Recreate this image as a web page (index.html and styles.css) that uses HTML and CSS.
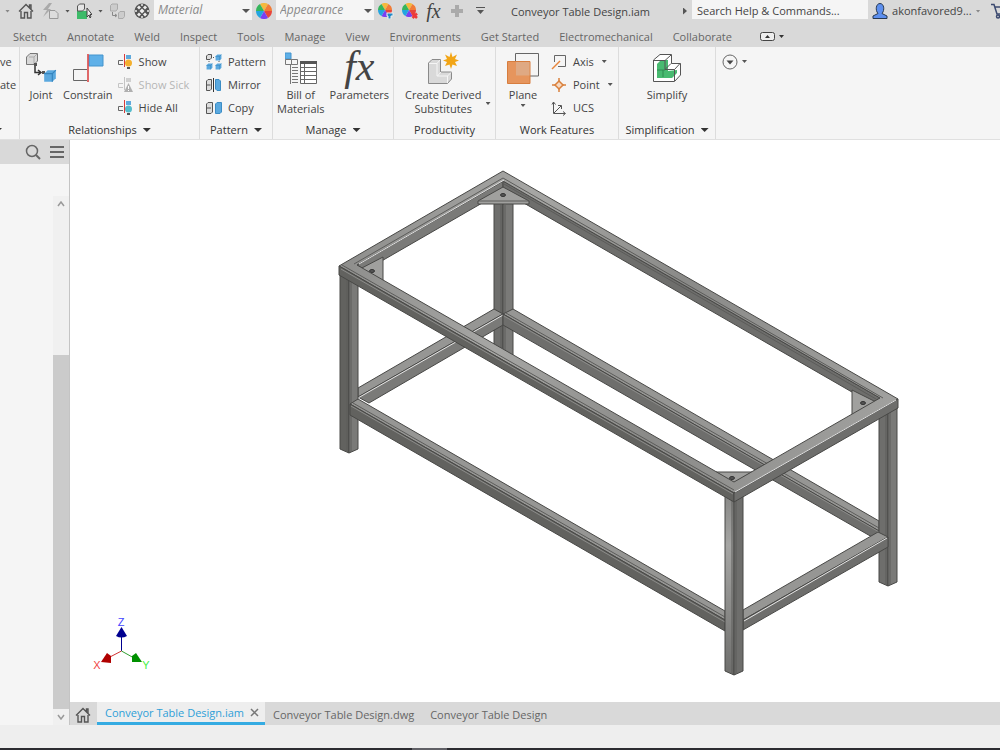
FILE: index.html
```
<!DOCTYPE html>
<html lang="en">
<head>
<meta charset="UTF-8">
<meta name="viewport" content="width=device-width, initial-scale=1.0">
<title>Conveyor Table Design.iam</title>
<link rel="stylesheet" href="styles.css">
</head>
<body>
<svg class="defs" width="0" height="0">
    <defs>
        <symbol id="wheel" viewBox="0 0 16 16">
            <path d="M8 8L4 1.100A8 8 0 0 1 12 1.100Z" fill="#f5b93c"/>
            <path d="M8 8L12 1.100A8 8 0 0 1 16 8Z" fill="#f27b35"/>
            <path d="M8 8L16 8A8 8 0 0 1 12 14.900Z" fill="#e8453c"/>
            <path d="M8 8L12 14.900A8 8 0 0 1 4 14.900Z" fill="#7a3ff2"/>
            <path d="M8 8L4 14.900A8 8 0 0 1 0 8Z" fill="#22a5e0"/>
            <path d="M8 8L0 8A8 8 0 0 1 4 1.100Z" fill="#35b55c"/>
        </symbol>
        <symbol id="house" viewBox="0 0 16 16">
            <path d="M1 8.500L8 1.500L15 8.500M3 8V15H6.500V9.500H9.500V15H13V8M11.500 4.500V2H13V6" fill="none" stroke="#555" stroke-width="1.400"/>
        </symbol>
        <symbol id="cube" viewBox="0 0 12 12">
            <path d="M1 4L4 1H11V8L8 11H1Z" fill="#5ba9df"/>
            <path d="M1 4H8V11M8 4L11 1" fill="none" stroke="#3585be"/>
        </symbol>
    </defs>
</svg>
<div class="app">
    <header class="titlebar">
        <i class="arrow faint"></i>
        <button class="tool" aria-label="Home"><svg width="16" height="16"><use href="#house"/></svg></button>
        <button class="tool" aria-label="Update">
            <svg width="17" height="16" fill="none"><path d="M7 0L1 7H5L1 14L9 6H6L10 0Z" fill="#aaa"/><path d="M7.500 7.500H13L16 10.500V15.500H7.500Z" fill="#ddd" stroke="#999"/></svg>
        </button>
        <i class="arrow"></i>
        <button class="tool" aria-label="Select">
            <svg width="16" height="16" fill="none"><path d="M1 8H11V16H1Z" fill="#3dbb69"/><path d="M1.500 3L3.500 1H8.500V6L6.500 8H1.500Z" fill="#e6e6e6" stroke="#555"/><path d="M11 5V14L13 12L14 15L15 14L14 11.500H16Z" fill="#eee" stroke="#444"/></svg>
        </button>
        <i class="arrow"></i>
        <button class="tool" aria-label="Joint view">
            <svg width="17" height="16" fill="none"><path d="M1.500 2.500L3 1H8.500V6L7 8H1.500ZM9.500 10L11 8.500H15.500V13.500L14 15.500H9.500Z" fill="#ccc" stroke="#aaa"/><path d="M3.500 9V12.500H7M6 11L8 12.500L6 14" stroke="#888"/></svg>
        </button>
        <button class="tool" aria-label="Material browser">
            <svg width="16" height="16"><circle cx="8" cy="8" r="7.500" fill="#555"/><g fill="#eee"><path d="M8 5.500L10.500 8L8 10.500L5.500 8Z"/><path d="M5 2.500L7 4.500L5 6.500L3 4.500ZM11 2.500L13 4.500L11 6.500L9 4.500ZM5 9.500L7 11.500L5 13.500L3 11.500ZM11 9.500L13 11.500L11 13.500L9 11.500Z"/><circle cx="8" cy="2" r="1"/><circle cx="8" cy="14" r="1"/><circle cx="2" cy="8" r="1"/><circle cx="14" cy="8" r="1"/></g></svg>
        </button>
        <label class="combo"><select aria-label="Material"><option>Material</option></select></label>
        <button class="tool" aria-label="Appearance browser"><svg width="16" height="16"><use href="#wheel"/></svg></button>
        <label class="combo"><select aria-label="Appearance"><option>Appearance</option></select></label>
        <button class="tool" aria-label="Adjust">
            <svg width="17" height="16"><use href="#wheel" width="14" height="14"/><path d="M9 10H15V13H13V16H10V13H9Z" fill="#2089c8" stroke="#eee"/></svg>
        </button>
        <button class="tool wide" aria-label="Clear">
            <svg width="17" height="16"><use href="#wheel" width="14" height="14"/><path d="M10.500 10.500L15 15M15 10.500L10.500 15" stroke="#ee3a3a" stroke-width="2.500"/></svg>
        </button>
        <button class="tool wide fx">fx</button>
        <button class="tool wide" aria-label="Add"><svg width="12" height="12"><path d="M6 0V12M0 6H12" stroke="#aaa" stroke-width="4"/></svg></button>
        <button class="tool" aria-label="Customize"><svg width="9" height="8"><path d="M0 .500H9" stroke="#555"/><path d="M1 3H8L4.500 7Z" fill="#555"/></svg></button>
        <span class="doc-title">Conveyor Table Design.iam</span>
        <i class="arrow-right"></i>
        <input class="search" type="text" aria-label="Search" placeholder="Search Help &amp; Commands...">
        <button class="user">
            <svg width="16" height="16"><path d="M1 15.500V13L6 10.500C3 7 4 .500 8 .500S13 7 10 10.500L15 13V15.500Z" fill="#5d8fee" stroke="#273850"/></svg>
            akonfavored9...
        </button>
        <i class="arrow faint"></i>
        <button class="tool cart" aria-label="Store"><svg width="18" height="16" fill="none" stroke="#3c4a70" stroke-width="1.500"><path d="M0 1.500H3L6 11H15L17 4H4"/><circle cx="7" cy="13.500" r="1.500"/><circle cx="14" cy="13.500" r="1.500"/></svg></button>
    </header>

    <nav class="tabs">
        <a href="#">Sketch</a>
        <a href="#">Annotate</a>
        <a href="#">Weld</a>
        <a href="#">Inspect</a>
        <a href="#">Tools</a>
        <a href="#">Manage</a>
        <a href="#">View</a>
        <a href="#">Environments</a>
        <a href="#">Get Started</a>
        <a href="#">Electromechanical</a>
        <a href="#">Collaborate</a>
        <button class="tool minimize" aria-label="Minimize ribbon">
            <svg width="24" height="9"><rect x=".5" y=".5" width="14" height="8" rx="2" fill="#eee" stroke="#444"/><path d="M5 6L7.500 3L10 6ZM19 3H24L21.500 6Z" fill="#333"/></svg>
        </button>
    </nav>

    <div class="ribbon">
        <section class="panel position">
            <div class="tools">
                <div class="stack">
                    <button>ve</button>
                    <button>ate</button>
                </div>
            </div>
            <h2><i class="arrow big"></i></h2>
        </section>
        <section class="panel relationships">
            <div class="tools">
                <button class="large">
                    <svg width="32" height="32" fill="none"><path d="M1.500 5L5 1.500H12.500V9L9 12.500H1.500Z" fill="#d8d8d8" stroke="#777"/><path d="M4 5H9V12M9 5L12 2" stroke="#aaa"/><path d="M10 14V20.500H15M13 18L16 20.500L13 23" stroke="#333" stroke-width="1.500"/><path d="M9 11H12V14H9ZM17 19H20V22H17Z" fill="#555"/><use href="#cube" x="18" y="17" width="14" height="14"/></svg>
                    Joint
                </button>
                <button class="large constrain">
                    <svg width="32" height="32" fill="none"><path d="M17 3H31V14H17Z" fill="#5fb0e8" stroke="#4494cd"/><path d="M15 17.500H1.500V28.500H15" stroke="#666"/><path d="M16 2V30" stroke="#d83a3a" stroke-width="1.500"/></svg>
                    Constrain
                </button>
                <div class="stack">
                    <button><svg width="16" height="16" fill="none"><path d="M6 6.500H1.500V10.500H6" stroke="#666"/><path d="M7.500 0V13" stroke="#d83a3a"/><path d="M9 1H14V5H9Z" fill="#5fa9dc"/><circle cx="11.500" cy="9" r="3.500" fill="#f4b02e"/><path d="M10 13H13V15H10Z" fill="#555"/></svg>Show</button>
                    <button disabled><svg width="16" height="16" fill="none"><path d="M6 6.500H1.500V10.500H6M7.500 0V13" stroke="#c4c4c4"/><path d="M9 1H14V5H9Z" fill="#d0d0d0"/><path d="M11.500 6L16 15H7Z" fill="#b0b0b0"/><path d="M11.500 9V12M11.500 13V14" stroke="#fff"/></svg>Show Sick</button>
                    <button><svg width="16" height="16" fill="none"><path d="M6 6.500H1.500V10.500H6" stroke="#666"/><path d="M7.500 0V13" stroke="#d83a3a"/><path d="M9 1H14V5H9Z" fill="#5fa9dc"/><circle cx="11.500" cy="9" r="3.500" fill="#55bccb"/><path d="M10 13H13V15H10Z" fill="#555"/></svg>Hide All</button>
                </div>
            </div>
            <h2>Relationships <i class="arrow big"></i></h2>
        </section>
        <section class="panel pattern">
            <div class="tools">
                <div class="stack">
                    <button><svg width="16" height="16" fill="none"><path d="M.500 2L2 .500H5.500V4L4 5.500H.500Z" fill="#ddd" stroke="#555"/><path d="M7 3.500H9M3 7V9M13 7V9" stroke="#555" stroke-dasharray="1 1"/><use href="#cube" x="9" y="0" width="7" height="7"/><use href="#cube" x="0" y="9" width="7" height="7"/><use href="#cube" x="9" y="9" width="7" height="7"/></svg>Pattern</button>
                    <button><svg width="16" height="16" fill="none"><path d="M.500 4L2 2.500H5.500V12L4 13.500H.500ZM.500 8H4.500" fill="#ddd" stroke="#555"/><path d="M7.500 1V15" stroke="#333"/><path d="M9.500 2.500H13L14.500 4V13.500H11L9.500 12Z" fill="#5ba9df" stroke="#3c8dc5"/></svg>Mirror</button>
                    <button><svg width="16" height="16" fill="none"><path d="M.500 4L2 2.500H6.500V12L5 13.500H.500ZM.500 8H5" fill="#ddd" stroke="#555"/><path d="M9.500 4L11 2.500H15.500V12L14 13.500H9.500Z" fill="#5ba9df" stroke="#3c8dc5"/></svg>Copy</button>
                </div>
            </div>
            <h2>Pattern <i class="arrow big"></i></h2>
        </section>
        <section class="panel manage">
            <div class="tools">
                <button class="large">
                    <svg width="32" height="32" fill="none"><path d="M0 1H6V7H0Z" fill="#5fb0e8" stroke="#4494cd"/><path d="M.500 7.500H6.500V12.500H.500ZM6.500 7.500H12.500V12.500H6.500ZM5.500 13V32" stroke="#777"/><path d="M7 15.500H13M7 18.500H13M7 21.500H13M7 24.500H13M7 27.500H13M7 30.500H13" stroke="#777"/><path d="M15.500 9.500H31.500V31.500H15.500ZM15.500 15.500H31.500M15.500 19.500H31.500M15.500 23.500H31.500M15.500 27.500H31.500M19.500 12V31" fill="#fff" stroke="#666"/><path d="M15 9H32V12H15Z" fill="#555"/></svg>
                    Bill of<br>Materials
                </button>
                <button class="large parameters"><span class="fx-large">fx</span>Parameters</button>
            </div>
            <h2>Manage <i class="arrow big"></i></h2>
        </section>
        <section class="panel productivity">
            <div class="tools">
                <button class="large">
                    <svg width="32" height="32" fill="none"><path d="M1.500 11L5 7.500H13.500V20H24.500V27L20.500 31.500H1.500Z" fill="#d9d9d9" stroke="#8a8a8a"/><path d="M2 11.500H10V24H20.500V31M10 11.500L13 8M10.500 24L14 20M20.500 24L24 20.500" stroke="#f5f5f5"/><path d="M24 0L25.500 5L30 2.500L28 7L32 8.500L28 10L30 14L25.500 12.500L24 17L22.500 12.500L18 14L20 10L16 8.500L20 7L18 2.500L22.500 5Z" fill="#f2a516"/></svg>
                    Create Derived<br>Substitutes
                </button>
                <i class="arrow side"></i>
            </div>
            <h2>Productivity</h2>
        </section>
        <section class="panel features">
            <div class="tools">
                <button class="large">
                    <svg width="32" height="32" fill="none"><path d="M8.500 1.500H31.500V24H8.500Z" stroke="#666"/><path d="M.500 9.500H23V31.500H.500Z" fill="#e6955d" stroke="#d77d3e"/><path d="M9 10H22.500V23.500H9Z" fill="#dfa983"/></svg>
                    Plane
                    <i class="arrow"></i>
                </button>
                <div class="stack">
                    <button><svg width="16" height="16" fill="none"><path d="M3.500 8V1.500H14.500V12.500H7" stroke="#666"/><path d="M1 15L9 7" stroke="#e8853b" stroke-width="1.500"/></svg>Axis <i class="arrow"></i></button>
                    <button><svg width="16" height="16" fill="none" stroke="#d9803c"><path d="M8 1V5M8 11V15M1 8H4M12 8H15" stroke-width="1.500"/><path d="M8 4L12 8L8 12L4 8Z" fill="#f6d9c2" stroke-width="1.500"/></svg>Point <i class="arrow"></i></button>
                    <button><svg width="16" height="16" fill="none" stroke="#555"><path d="M2.500 2V13.500H14M1 4.500L2.500 2L4.500 4.500M12 11.500L14.500 13.500L12 15.500M3 13L10 6M7 5.500H10.500V9"/></svg>UCS</button>
                </div>
            </div>
            <h2>Work Features</h2>
        </section>
        <section class="panel simplification">
            <div class="tools">
                <button class="large">
                    <svg width="32" height="32" fill="none"><path d="M2.500 8L9 2.500H20.500V11.500H29.500V23L23.500 29.500H2.500Z" fill="#fff" stroke="#555"/><path d="M6 12L10 8H17V19L26 18V21L21 26H6Z" fill="#48ba70"/><path d="M2.500 8.500H14V17.500H23.500V29M14 8.500L20 3M14 17.500L20 11.500M23.500 17.500L29 11.500" stroke="#555"/><path d="M6 18H14M12 18V25" stroke="#2f8a50"/></svg>
                    Simplify
                </button>
            </div>
            <h2>Simplification <i class="arrow big"></i></h2>
        </section>
        <section class="panel more">
            <div class="tools">
                <div class="stack">
                    <button aria-label="More"><svg width="16" height="16"><circle cx="8" cy="8" r="7" fill="none" stroke="#666"/><path d="M4.500 6.500H11.500L8 10.500Z" fill="#444"/></svg><i class="arrow"></i></button>
                </div>
            </div>
        </section>
    </div>

    <div class="workspace">
        <aside class="browser">
            <div class="browser-bar">
                <button class="tool" aria-label="Find"><svg width="16" height="16" fill="none" stroke="#666"><circle cx="7" cy="7" r="5.500" stroke-width="1.500"/><path d="M11 11L15 15" stroke-width="2"/></svg></button>
                <button class="tool" aria-label="Menu"><svg width="14" height="14" stroke="#666" stroke-width="2"><path d="M0 2H14M0 7H14M0 12H14"/></svg></button>
            </div>
            <div class="scrollbar">
                <button class="tool" aria-label="Scroll up"><svg width="8" height="6"><path d="M1 5L4 1L7 5" fill="none" stroke="#999" stroke-width="1.500"/></svg></button>
                <div class="thumb"></div>
                <button class="tool" aria-label="Scroll down"><svg width="8" height="6"><path d="M1 1L4 5L7 1" fill="none" stroke="#999" stroke-width="1.500"/></svg></button>
            </div>
        </aside>
        <main>
            <!-- isometric view of the welded table frame -->
            <svg class="viewport" viewBox="70 140 930 562" role="img" aria-label="Table frame">
                <defs>
                    <linearGradient id="top" gradientUnits="userSpaceOnUse" x1="340" y1="265" x2="890" y2="400"><stop offset="0" stop-color="#8e8e8c"/><stop offset=".3" stop-color="#a6a6a4"/><stop offset=".6" stop-color="#8a8a88"/><stop offset="1" stop-color="#a0a09e"/></linearGradient>
                    <linearGradient id="post" x1="0" y1="0" x2="0" y2="1"><stop offset="0" stop-color="#858583"/><stop offset=".3" stop-color="#a6a6a4"/><stop offset="1" stop-color="#6f6f6d"/></linearGradient>
                </defs>
                <g class="steel">
                    <!-- back leg -->
                    <path class="dark" d="M494 190H503V360L494 355Z"/>
                    <path class="mid" d="M503 190H513V355L503 360Z"/>
                    <path class="edge" d="M501 205V359M505 205V359"/>
                    <!-- lower back rails -->
                    <path class="light" d="M358 388L494 309L503 314L358 397Z"/>
                    <path class="mid" d="M358 397L503 314V325L369 403Z"/>
                    <path class="shine" d="M358 398L503 315"/>
                    <path class="light" d="M503 314L513 309L879 521V531Z"/>
                    <path class="dark" d="M503 314L879 531V541L503 325Z"/>
                    <path class="edge" d="M506 313L879 528"/>
                    <path class="glint" d="M504 316L879 532"/>
                    <!-- left leg -->
                    <path class="darker" d="M340 270H349V453L340 449Z"/>
                    <path class="mid" d="M349 270H358V449L349 453Z"/>
                    <path class="edge" d="M347 278V452M351 278V452"/>
                    <!-- right leg -->
                    <path class="dark" d="M879 400H888V586L879 582Z"/>
                    <path class="mid" d="M888 400H897V582L888 586Z"/>
                    <path class="edge" d="M886 411V585M890 411V585"/>
                    <!-- lower front rails -->
                    <path class="light" d="M350 404L358 399L725 611V620Z"/>
                    <path class="darker" d="M350 404L725 620V631L350 415Z"/>
                    <path class="edge" d="M353 403L725 617"/>
                    <path class="glint" d="M351 406L725 622"/>
                    <path class="light" d="M743 610L878 532L888 537L743 620Z"/>
                    <path class="dark" d="M743 620L888 537V547L743 630Z"/>
                    <path class="shine" d="M744 621L887 538"/>
                    <!-- front leg -->
                    <path fill="url(#post)" d="M725 490H734V675L725 671Z"/>
                    <path class="dark" d="M734 490H743V671L734 675Z"/>
                    <path class="edge" d="M732 500V674M736 500V674"/>
                    <!-- inner walls of the top frame -->
                    <path class="mid" d="M503 181L357 265L366 270L503 191Z"/>
                    <path class="dark" d="M503 181L880 398L871 403L503 191Z"/>
                    <path class="edge" d="M504 184L876 399"/>
                    <path class="edge" d="M503 177V190"/>
                    <!-- corner gussets -->
                    <path class="plate" d="M503 187L529 201V204H478V201Z"/>
                    <path class="edge" d="M478 201H529"/>
                    <path class="plate" d="M358 270L383 257V281Z"/>
                    <path class="plate" d="M852 390L878 403L852 416Z"/>
                    <path class="plate" d="M716 472H752L734 483Z"/>
                    <g class="hole"><ellipse cx="503" cy="195" rx="2.500" ry="1.500"/><ellipse cx="372" cy="271" rx="2.500" ry="1.500"/><ellipse cx="863" cy="403" rx="2.500" ry="1.500"/><ellipse cx="732" cy="478" rx="2.500" ry="1.500"/></g>
                    <!-- top frame -->
                    <path fill="url(#top)" fill-rule="evenodd" d="M503 171L898 399L734 493L339 266ZM503 181L357 265L734 482L880 398Z"/>
                    <path class="darker" d="M339 266L734 493V502L339 275Z"/>
                    <path class="dark" d="M734 493L898 399V408L734 502Z"/>
                    <path class="edge" d="M342 265L734 490M503 178L354 264M503 178L883 398"/>
                    <path class="shine" d="M504 180L359 264M735 492L896 400"/>
                    <path class="glint" d="M341 269L733 494"/>
                </g>
                <!-- axis triad -->
                <path d="M121.500 651V636" stroke="#000090"/>
                <path d="M121.500 651L108 658" stroke="#d03030"/>
                <path d="M121.500 651L134 658" stroke="#30a030"/>
                <path d="M121.500 627L127 636Q121.500 639 116 636Z" fill="#000090"/>
                <path d="M101 662L107 653L111 656V663Z" fill="#b00000"/>
                <path d="M142 662L136 653L132 656V662Z" fill="#009000"/>
                <g class="axis">
                    <text x="121" y="626" fill="#4545ff">Z</text>
                    <text x="97" y="669" fill="#f04545">X</text>
                    <text x="146" y="669" fill="#45f045">Y</text>
                </g>
            </svg>
            <nav class="documents">
                <a class="home" href="#" aria-label="Home"><svg width="16" height="16"><use href="#house"/></svg></a>
                <a class="active" href="#">Conveyor Table Design.iam <svg width="9" height="9"><path d="M1 1L8 8M8 1L1 8" stroke="#777" stroke-width="1.500"/></svg></a>
                <a href="#">Conveyor Table Design.dwg</a>
                <a href="#">Conveyor Table Design</a>
            </nav>
        </main>
    </div>
    <footer class="statusbar"></footer>
    <div class="taskbar"><span></span></div>
</div>
</body>
</html>
```

FILE: styles.css
```
* {
    box-sizing: border-box;
}
body {
    margin: 0;
    font-family: "Open Sans", "Noto Sans", sans-serif;
    font-size: 11px;
    line-height: 14px;
    color: #444;
    background: #f5f5f5;
    overflow: hidden;
}
button,
input,
select {
    font: inherit;
    color: inherit;
    border: none;
    padding: 0;
    background: none;
}
a {
    color: inherit;
    text-decoration: none;
}
svg {
    display: block;
    flex: none;
}
.defs {
    position: absolute;
}
.app {
    display: flex;
    flex-direction: column;
    height: 100vh;
}

/* drop-down arrows */
.arrow {
    flex: none;
    width: 5px;
    height: 3px;
    background: #555;
    clip-path: polygon(0 0, 100% 0, 50% 100%);
}
.arrow.faint {
    background: #888;
}
.arrow.big {
    width: 8px;
    height: 4px;
    background: #333;
}
.arrow-right {
    flex: none;
    width: 4px;
    height: 7px;
    margin: 0 5px 0 33px;
    background: #555;
    clip-path: polygon(0 0, 100% 50%, 0 100%);
}

/* title bar */
.titlebar {
    display: flex;
    align-items: center;
    height: 22px;
    padding-left: 5px;
    background: #d9d9d9;
    overflow: hidden;
}
.tool {
    flex: none;
    display: flex;
    align-items: center;
    justify-content: center;
}
.titlebar .tool {
    min-width: 16px;
    margin: 0 4px;
}
.titlebar .arrow {
    margin: 0 2px;
}
.titlebar .arrow.faint {
    margin: 0 4px 0 0;
}
.titlebar .tool.wide {
    min-width: 17px;
    margin: 0 3px;
}
.combo {
    position: relative;
    flex: none;
    height: 20px;
    background: #f5f5f5;
    align-self: flex-start;
}
.combo select {
    width: 98px;
    height: 20px;
    padding-left: 4px;
    appearance: none;
    font-style: italic;
    font-size: 12px;
    color: #8a8a8a;
}
.combo::after {
    content: "";
    position: absolute;
    right: 2px;
    top: 9px;
    width: 8px;
    height: 4px;
    background: #555;
    clip-path: polygon(0 0, 100% 0, 50% 100%);
}
.fx,
.fx-large {
    font-family: "Liberation Serif", serif;
    font-style: italic;
    color: #444;
}
.fx {
    font-size: 20px;
}
.doc-title {
    flex: none;
    margin-left: 19px;
    padding-top: 2px;
}
.search {
    flex: none;
    width: 176px;
    height: 19px;
    padding: 1px 5px 0;
    background: #f5f5f5;
    align-self: flex-start;
}
.search::placeholder {
    color: #444;
    opacity: 1;
}
.user {
    flex: none;
    display: flex;
    align-items: center;
    gap: 4px;
    padding: 0 4px;
}
.titlebar .tool.cart {
    margin: 0 0 0 6px;
}

/* ribbon tabs */
.tabs {
    display: flex;
    align-items: center;
    gap: 20px;
    height: 25px;
    padding: 4px 0 0 13px;
    background: #d9d9d9;
    color: #666;
}
.minimize {
    margin-left: 8px;
}

/* ribbon */
.ribbon {
    display: flex;
    height: 93px;
    border-bottom: 1px solid #e0e0e0;
}
.panel {
    flex: none;
    display: flex;
    flex-direction: column;
    justify-content: space-between;
    border-right: 1px solid #dcdcdc;
}
.panel.more {
    border: none;
}
.more .stack button {
    gap: 2px;
}
.panel h2 {
    display: flex;
    align-items: center;
    justify-content: center;
    gap: 6px;
    height: 14px;
    margin: 0 0 2px;
    font-size: 11px;
    font-weight: normal;
    color: #333;
}
.tools {
    display: flex;
    padding: 3px 0 0 6px;
}
.large {
    display: flex;
    flex-direction: column;
    align-items: center;
    line-height: 14px;
    align-self: flex-start;
    padding-top: 2px;
}
.large svg,
.fx-large {
    height: 32px;
    margin-bottom: 4px;
}
.large .arrow {
    margin-top: 2px;
}
.fx-large {
    font-size: 42px;
    line-height: 28px;
}
.stack button {
    display: flex;
    align-items: center;
    gap: 6px;
    height: 23px;
    white-space: nowrap;
}
.stack .arrow {
    margin-left: 2px;
}
.stack button:disabled {
    color: #b5b5b5;
}
.position {
    width: 20px;
}
.position .tools {
    padding-left: 0;
}
.position h2 {
    justify-content: flex-start;
    margin-left: -6px;
}
.relationships {
    width: 180px;
}
.relationships .tools {
    padding-left: 5px;
}
.constrain {
    margin: 0 4px 0 6px;
}
.pattern {
    width: 73px;
}
.manage {
    width: 121px;
}
.manage .tools {
    padding-left: 4px;
}
.parameters {
    margin-left: 5px;
}
.productivity {
    width: 102px;
}
.productivity .tools {
    padding-left: 11px;
}
.side {
    margin: 52px 0 0 4px;
}
.features {
    width: 123px;
}
.features .tools {
    gap: 12px;
    padding-left: 11px;
}
.simplification {
    width: 97px;
}
.simplification .tools {
    justify-content: center;
    padding-left: 0;
}

/* model browser */
.workspace {
    flex: 1;
    display: flex;
    min-height: 0;
}
.browser {
    flex: none;
    display: flex;
    flex-direction: column;
    width: 70px;
    border-right: 1px solid #c4c4c4;
}
.browser-bar {
    display: flex;
    justify-content: flex-end;
    gap: 9px;
    height: 24px;
    padding-right: 5px;
    background: #d9d9d9;
}
.scrollbar {
    flex: 1;
    display: flex;
    flex-direction: column;
    align-self: flex-end;
    width: 16px;
    margin-top: 32px;
    background: #f0f0f0;
}
.scrollbar .tool {
    height: 16px;
}
.thumb {
    flex: 0 1 67%;
    margin-top: auto;
    background: #cbcbcb;
}

/* drawing area */
main {
    flex: 1;
    display: flex;
    flex-direction: column;
    min-width: 0;
    background: #fff;
}
.viewport {
    flex: 1;
    width: 100%;
    min-height: 0;
}
.steel path {
    stroke: #484846;
    stroke-width: 1;
}
.light {
    fill: #969694;
}
.mid {
    fill: #7a7a78;
}
.dark {
    fill: #6e6e6c;
}
.darker {
    fill: #62625f;
}
.plate {
    fill: #a0a09e;
}
.hole {
    fill: #555;
    stroke: #333;
}
.steel .edge {
    fill: none;
    stroke: #5c5c5a;
}
.steel .shine {
    stroke: #e6e6e6;
}
.steel .glint {
    stroke: #8c8c8a;
}
.axis {
    font-family: "Liberation Sans", sans-serif;
    font-size: 11px;
    text-anchor: middle;
}
.documents {
    display: flex;
    height: 23px;
    background: #d9d9d9;
    color: #666;
}
.documents a {
    display: flex;
    align-items: center;
    gap: 6px;
    padding: 3px 8px 0;
}
.documents a.home {
    padding: 2px 6px 0 5px;
}
.documents a.active {
    padding: 1px 6px 0 8px;
    background: #eee;
    color: #2f9fd8;
    border-bottom: 3px solid #35abe2;
}
.statusbar {
    height: 23px;
    background: #eee;
}
.taskbar {
    display: flex;
    justify-content: center;
    height: 2px;
    padding-right: 142px;
    background: #2b2b30;
}
.taskbar span {
    width: 35px;
    background: #606066;
}
```
